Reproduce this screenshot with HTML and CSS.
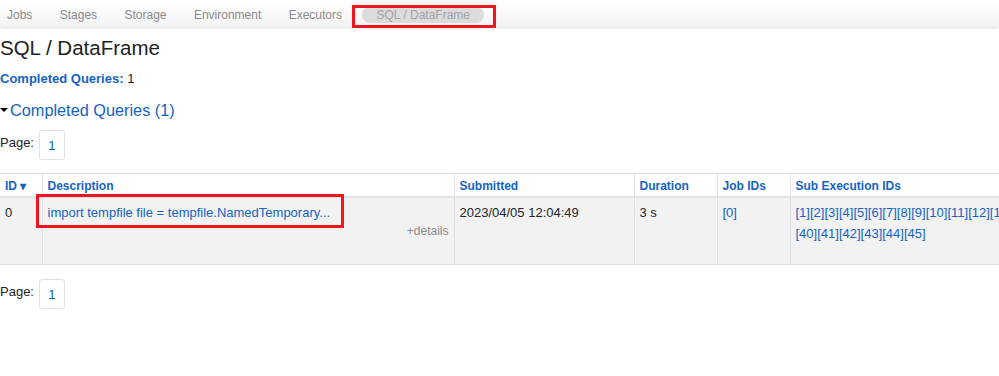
FILE: index.html
```html
<!DOCTYPE html>
<html lang="en">
<head>
<meta charset="utf-8">
<title>SQL / DataFrame</title>
<link rel="stylesheet" href="styles.css">
</head>
<body>
<div class="navbar">
  <ul class="nav">
    <li class="nav-item"><a href="#">Jobs</a></li>
    <li class="nav-item"><a href="#">Stages</a></li>
    <li class="nav-item"><a href="#">Storage</a></li>
    <li class="nav-item"><a href="#">Environment</a></li>
    <li class="nav-item"><a href="#">Executors</a></li>
    <li class="nav-item active"><a href="#">SQL / DataFrame</a><span class="mark mark-nav"></span></li>
  </ul>
</div>
<div class="content">
  <h3 class="title">SQL / DataFrame</h3>
  <div class="summary"><a href="#" class="summary-link">Completed Queries:</a> 1</div>
  <h4 class="section"><span class="arrow-open"></span><a href="#">Completed Queries (1)</a></h4>
  <div class="pager">
    <span class="pager-label">Page:</span>
    <a class="page-btn" href="#">1</a>
  </div>
  <div class="table-wrap">
    <table class="table">
      <colgroup>
        <col class="c-id"><col class="c-desc"><col class="c-sub"><col class="c-dur"><col class="c-job"><col class="c-exec">
      </colgroup>
      <thead>
        <tr>
          <th><a href="#">ID ▾</a></th>
          <th><a href="#">Description</a></th>
          <th><a href="#">Submitted</a></th>
          <th><a href="#">Duration</a></th>
          <th><a href="#">Job IDs</a></th>
          <th><a href="#">Sub Execution IDs</a></th>
        </tr>
      </thead>
      <tbody>
        <tr class="row">
          <td>0</td>
          <td class="desc">
            <a href="#">import tempfile file = tempfile.NamedTemporary...</a>
            <span class="details">+details</span>
            <span class="mark mark-desc"></span>
          </td>
          <td>2023/04/05 12:04:49</td>
          <td>3 s</td>
          <td><a href="#">[0]</a></td>
          <td class="execs">
            <span class="ids"><a href="#">[1]</a><a href="#">[2]</a><a href="#">[3]</a><a href="#">[4]</a><a href="#">[5]</a><a href="#">[6]</a><a href="#">[7]</a><a href="#">[8]</a><a href="#">[9]</a><a href="#">[10]</a><a href="#">[11]</a><a href="#">[12]</a><a href="#">[13]</a><a href="#">[14]</a><a href="#">[15]</a><a href="#">[16]</a><a href="#">[17]</a><a href="#">[18]</a><a href="#">[19]</a><a href="#">[20]</a><a href="#">[21]</a><a href="#">[22]</a><a href="#">[23]</a><a href="#">[24]</a><a href="#">[25]</a><a href="#">[26]</a><a href="#">[27]</a><a href="#">[28]</a><a href="#">[29]</a><a href="#">[30]</a><a href="#">[31]</a><a href="#">[32]</a><a href="#">[33]</a><a href="#">[34]</a><a href="#">[35]</a><a href="#">[36]</a><a href="#">[37]</a><a href="#">[38]</a><a href="#">[39]</a></span>
            <span class="ids"><a href="#">[40]</a><a href="#">[41]</a><a href="#">[42]</a><a href="#">[43]</a><a href="#">[44]</a><a href="#">[45]</a></span>
          </td>
        </tr>
      </tbody>
    </table>
  </div>
  <div class="pager pager-bottom">
    <span class="pager-label">Page:</span>
    <a class="page-btn" href="#">1</a>
  </div>
</div>
</body>
</html>
```

FILE: styles.css
```css
html, body {
  margin: 0;
  padding: 0;
  background: #ffffff;
  overflow: hidden;
}
body {
  font-family: "Liberation Sans", Arial, Helvetica, sans-serif;
  font-size: 13px;
  line-height: 19px;
  color: #212529;
}
a {
  color: #1463c4;
  text-decoration: none;
}

/* navbar */
.navbar {
  height: 27px;
  background: linear-gradient(to bottom, #ffffff 0%, #f3f3f3 100%);
  box-shadow: 0 1px 3px rgba(0, 0, 0, 0.12);
  position: relative;
  z-index: 1;
}
.nav {
  list-style: none;
  margin: 0;
  padding: 0 0 0 7px;
  display: flex;
  gap: 27.4px;
  height: 27px;
  align-items: flex-start;
}
.nav-item {
  font-size: 12px;
  line-height: 16px;
  padding-top: 7px;
}
.nav-item a {
  color: #8a8a8a;
}
.nav-item.active {
  position: relative;
  margin-left: 7px;
}
.nav-item.active a {
  display: block;
  margin-left: -14px;
  padding: 0 14px;
  background: #dbdbdb;
  border-radius: 8px;
  color: #a3a3a3;
}
.mark {
  position: absolute;
  border: 3px solid #f0141e;
  box-sizing: border-box;
}
.mark-nav {
  left: -24px;
  top: 5px;
  width: 144px;
  height: 23px;
}

/* content */
.title {
  margin: 9px 0 0;
  font-size: 20.5px;
  line-height: 24px;
  font-weight: normal;
  color: #212121;
}
.summary {
  margin-top: 9px;
}
.summary-link {
  font-weight: bold;
}
.section {
  margin: 12px 0 0;
  font-size: 16.3px;
  line-height: 20px;
  font-weight: normal;
  display: flex;
  align-items: center;
}
.arrow-open {
  display: inline-block;
  width: 0;
  height: 0;
  border-left: 4px solid transparent;
  border-right: 4px solid transparent;
  border-top: 4px solid #000000;
  margin-right: 2px;
  margin-top: -1px;
}
.pager {
  margin-top: 10px;
  display: flex;
  align-items: flex-start;
  gap: 5px;
}
.pager-label {
  padding-top: 3px;
}
.page-btn {
  display: block;
  width: 24px;
  height: 20px;
  border: 1px solid #dee2e6;
  border-radius: 3px;
  text-align: center;
  line-height: 20px;
  padding-top: 5px;
  padding-bottom: 3px;
}

/* table */
.table-wrap {
  margin-top: 13px;
  overflow: hidden;
  width: 100%;
}
.table {
  border-collapse: collapse;
  table-layout: fixed;
  width: 1600px;
}
.c-id { width: 42px; }
.c-desc { width: 412px; }
.c-sub { width: 180px; }
.c-dur { width: 83px; }
.c-job { width: 73px; }
.c-exec { width: 810px; }
.table th,
.table td {
  border: 1px solid #dee2e6;
  text-align: left;
  vertical-align: top;
}
.table th {
  font-size: 12px;
  line-height: 18px;
  font-weight: bold;
  padding: 3px 5px 1px;
  border-bottom: 2px solid #dee2e6;
}
.table td {
  padding: 5px 5px;
  background: #f2f2f2;
}
.table tbody tr.row td {
  height: 56px;
}
.table td:first-child,
.table th:first-child {
  border-left: 0;
}
.desc {
  position: relative;
}
.desc a {
  display: block;
}
.details {
  display: block;
  text-align: right;
  color: #8a8a8a;
  font-size: 12px;
}
.mark-desc {
  left: -7px;
  top: -4px;
  width: 308px;
  height: 34px;
}
.execs {
  line-height: 21px;
}
.execs .ids {
  display: block;
  white-space: nowrap;
  margin-top: -1px;
}
.execs .ids + .ids {
  margin-top: 0;
}
.pager-bottom {
  margin-top: 14px;
}
```
